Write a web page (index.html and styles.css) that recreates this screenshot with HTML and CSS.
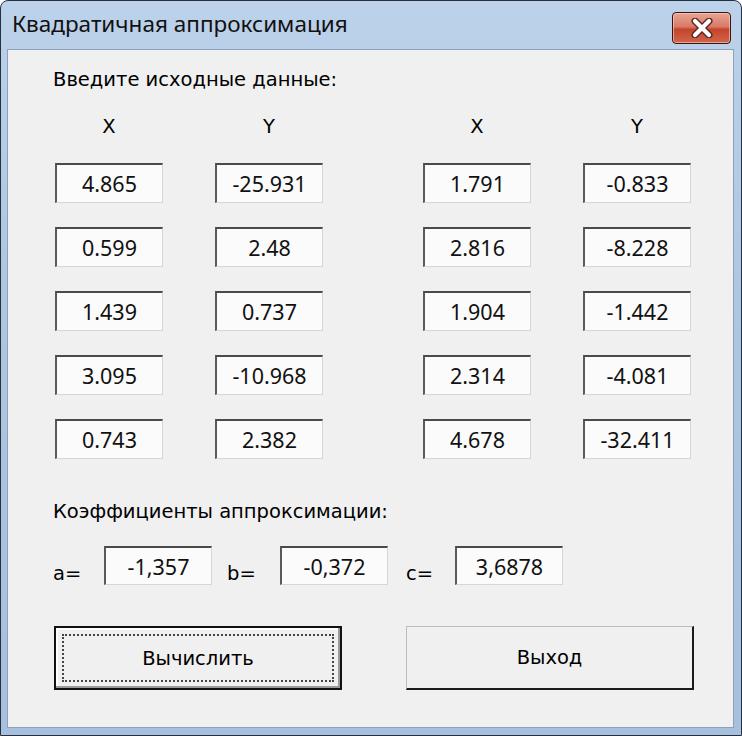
FILE: index.html
```html
<!DOCTYPE html>
<html lang="ru">
<head>
<meta charset="utf-8">
<title>Квадратичная аппроксимация</title>
<link rel="stylesheet" href="styles.css">
</head>
<body>
<div class="window">
  <div class="titlebar">
    <span class="title">Квадратичная аппроксимация</span>
    <div class="close">
      <svg width="26" height="20" viewBox="0 0 26 20">
        <path d="M6 3 L20 17 M20 3 L6 17" stroke="#5a2a22" stroke-width="7" stroke-linecap="round"/>
        <path d="M6 3 L20 17 M20 3 L6 17" stroke="#ffffff" stroke-width="4.2" stroke-linecap="round"/>
      </svg>
    </div>
  </div>
  <div class="client">
    <div class="label first">Введите исходные данные:</div>
    <div class="grid">
      <div class="group">
        <div class="head">X</div><div class="head">Y</div>
        <div class="field">4.865</div><div class="field">-25.931</div>
        <div class="field">0.599</div><div class="field">2.48</div>
        <div class="field">1.439</div><div class="field">0.737</div>
        <div class="field">3.095</div><div class="field">-10.968</div>
        <div class="field">0.743</div><div class="field">2.382</div>
      </div>
      <div class="group">
        <div class="head">X</div><div class="head">Y</div>
        <div class="field">1.791</div><div class="field">-0.833</div>
        <div class="field">2.816</div><div class="field">-8.228</div>
        <div class="field">1.904</div><div class="field">-1.442</div>
        <div class="field">2.314</div><div class="field">-4.081</div>
        <div class="field">4.678</div><div class="field">-32.411</div>
      </div>
    </div>
    <div class="label second">Коэффициенты аппроксимации:</div>
    <div class="coefs">
      <span class="clabel la">a=</span><div class="field">-1,357</div>
      <span class="clabel lb">b=</span><div class="field">-0,372</div>
      <span class="clabel lc">c=</span><div class="field">3,6878</div>
    </div>
    <div class="buttons">
      <div class="btn default"><div class="focus">Вычислить</div></div>
      <div class="btn">Выход</div>
    </div>
  </div>
</div>
</body>
</html>
```
FILE: styles.css
```css
html, body {
  margin: 0;
  padding: 0;
  background: #ffffff;
}

.window {
  width: 742px;
  height: 736px;
  box-sizing: border-box;
  border: 1px solid #26313d;
  border-radius: 8px 8px 0 0;
  background: linear-gradient(180deg, #bcd2ea 0%, #adc6e2 40%, #a6c0dd 100%);
  padding: 0 7px 7px 6px;
  display: flex;
  flex-direction: column;
  font-family: "DejaVu Sans", sans-serif;
  color: #000;
}

.titlebar {
  height: 48px;
  display: flex;
  align-items: center;
  justify-content: space-between;
  flex-shrink: 0;
}

.title {
  font-family: "Noto Sans", sans-serif;
  font-size: 22.5px;
  color: #111;
  margin-left: 5px;
  margin-top: -4px;
}

.close {
  width: 59px;
  height: 32px;
  box-sizing: border-box;
  border: 1px solid #3b1510;
  border-radius: 4px;
  background: linear-gradient(180deg, #e8a596 0%, #d97a66 45%, #c4452b 55%, #d0664c 100%);
  box-shadow: inset 0 0 0 1px rgba(255,210,200,0.6);
  display: flex;
  align-items: center;
  justify-content: center;
  margin-right: 3px;
  margin-top: 5px;
}

.client {
  flex: 1;
  background: #f0f0f0;
  border: 1px solid #8aa2bc;
  padding: 0 0 0 45px;
  display: flex;
  flex-direction: column;
}

.label {
  font-size: 19.5px;
  line-height: 22px;
}

.label.first {
  margin-top: 19px;
}

.grid {
  display: flex;
  gap: 100px;
  margin-left: 2px;
  margin-top: 26px;
}

.group {
  display: grid;
  grid-template-columns: 108px 108px;
  column-gap: 52px;
  row-gap: 24px;
}

.head {
  text-align: center;
  font-size: 19.5px;
  line-height: 20px;
  margin-bottom: 2px;
}

.field {
  width: 108px;
  height: 40px;
  box-sizing: border-box;
  background: #fbfbfb;
  border-top: 2px solid #4a4a4a;
  border-left: 2px solid #5a5a5a;
  border-right: 1px solid #d6d6d6;
  border-bottom: 1px solid #d6d6d6;
  font-family: "Noto Sans", sans-serif;
  font-size: 21.5px;
  display: flex;
  align-items: center;
  justify-content: center;
  color: #111;
}

.label.second {
  margin-top: 42px;
}

.coefs {
  display: flex;
  align-items: flex-end;
  margin-top: 23px;
  height: 39px;
}

.coefs .field {
  height: 39px;
}

.clabel {
  font-size: 19.5px;
  line-height: 20px;
  margin-bottom: 1px;
}

.la { width: 51px; }
.lb { width: 53px; margin-left: 15px; }
.lc { width: 49px; margin-left: 18px; }

.buttons {
  display: flex;
  gap: 64px;
  margin-top: 41px;
  margin-left: 1px;
}

.btn {
  width: 288px;
  height: 64px;
  box-sizing: border-box;
  background: #f0f0f0;
  border-top: 1px solid #bdbdbd;
  border-left: 1px solid #bdbdbd;
  border-right: 2px solid #1a1a1a;
  border-bottom: 2px solid #1a1a1a;
  font-family: "DejaVu Sans", sans-serif;
  font-size: 19.5px;
  display: flex;
  align-items: center;
  justify-content: center;
}

.btn.default {
  border: 2px solid #111;
  box-shadow: inset -2px -2px 0 #9a9a9a, inset 2px 2px 0 #ffffff;
  padding: 6px;
}

.focus {
  flex: 1;
  align-self: stretch;
  border: 2px dotted #444;
  display: flex;
  align-items: center;
  justify-content: center;
}
```
